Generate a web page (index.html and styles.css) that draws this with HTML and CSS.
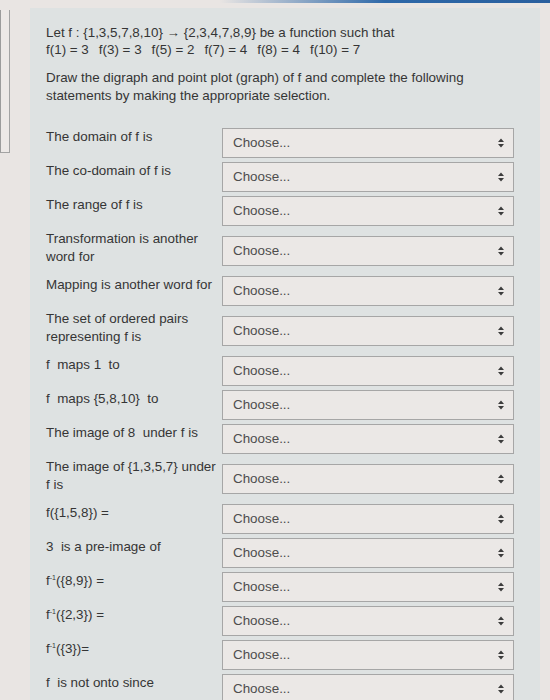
FILE: index.html
```html
<!DOCTYPE html>
<html lang="en">
<head>
<meta charset="utf-8">
<title>Function question</title>
<link rel="stylesheet" href="styles.css">
</head>
<body>
<div class="topbar"></div>
<div class="frame">
  <div class="sidetab"></div>
  <div class="gutter"></div>
  <main class="panel">
    <div class="intro">
      <p class="def">Let f : {1,3,5,7,8,10} → {2,3,4,7,8,9} be a function such that</p>
      <p class="values"><span>f(1) = 3</span><span>f(3) = 3</span><span>f(5) = 2</span><span>f(7) = 4</span><span>f(8) = 4</span><span>f(10) = 7</span></p>
      <p class="task">Draw the digraph and point plot (graph) of f and complete the following statements by making the appropriate selection.</p>
    </div>

    <div class="rows">
      <div class="row"><div class="label">The domain of f is</div><div class="select"><span>Choose...</span><svg class="arrows" width="6" height="10" viewBox="0 0 6 10"><path d="M0 4 L3 0.5 L6 4 Z M0 6 L3 9.5 L6 6 Z"/></svg></div></div>
      <div class="row"><div class="label">The co-domain of f is</div><div class="select"><span>Choose...</span><svg class="arrows" width="6" height="10" viewBox="0 0 6 10"><path d="M0 4 L3 0.5 L6 4 Z M0 6 L3 9.5 L6 6 Z"/></svg></div></div>
      <div class="row"><div class="label">The range of f is</div><div class="select"><span>Choose...</span><svg class="arrows" width="6" height="10" viewBox="0 0 6 10"><path d="M0 4 L3 0.5 L6 4 Z M0 6 L3 9.5 L6 6 Z"/></svg></div></div>
      <div class="row tall"><div class="label">Transformation is another word for</div><div class="select"><span>Choose...</span><svg class="arrows" width="6" height="10" viewBox="0 0 6 10"><path d="M0 4 L3 0.5 L6 4 Z M0 6 L3 9.5 L6 6 Z"/></svg></div></div>
      <div class="row"><div class="label">Mapping is another word for</div><div class="select"><span>Choose...</span><svg class="arrows" width="6" height="10" viewBox="0 0 6 10"><path d="M0 4 L3 0.5 L6 4 Z M0 6 L3 9.5 L6 6 Z"/></svg></div></div>
      <div class="row tall"><div class="label">The set of ordered pairs representing f is</div><div class="select"><span>Choose...</span><svg class="arrows" width="6" height="10" viewBox="0 0 6 10"><path d="M0 4 L3 0.5 L6 4 Z M0 6 L3 9.5 L6 6 Z"/></svg></div></div>
      <div class="row"><div class="label">f&nbsp; maps 1&nbsp; to</div><div class="select"><span>Choose...</span><svg class="arrows" width="6" height="10" viewBox="0 0 6 10"><path d="M0 4 L3 0.5 L6 4 Z M0 6 L3 9.5 L6 6 Z"/></svg></div></div>
      <div class="row"><div class="label">f&nbsp; maps {5,8,10}&nbsp; to</div><div class="select"><span>Choose...</span><svg class="arrows" width="6" height="10" viewBox="0 0 6 10"><path d="M0 4 L3 0.5 L6 4 Z M0 6 L3 9.5 L6 6 Z"/></svg></div></div>
      <div class="row"><div class="label">The image of 8&nbsp; under f is</div><div class="select"><span>Choose...</span><svg class="arrows" width="6" height="10" viewBox="0 0 6 10"><path d="M0 4 L3 0.5 L6 4 Z M0 6 L3 9.5 L6 6 Z"/></svg></div></div>
      <div class="row tall"><div class="label">The image of {1,3,5,7} under f is</div><div class="select"><span>Choose...</span><svg class="arrows" width="6" height="10" viewBox="0 0 6 10"><path d="M0 4 L3 0.5 L6 4 Z M0 6 L3 9.5 L6 6 Z"/></svg></div></div>
      <div class="row"><div class="label">f({1,5,8}) =</div><div class="select"><span>Choose...</span><svg class="arrows" width="6" height="10" viewBox="0 0 6 10"><path d="M0 4 L3 0.5 L6 4 Z M0 6 L3 9.5 L6 6 Z"/></svg></div></div>
      <div class="row"><div class="label">3&nbsp; is a pre-image of</div><div class="select"><span>Choose...</span><svg class="arrows" width="6" height="10" viewBox="0 0 6 10"><path d="M0 4 L3 0.5 L6 4 Z M0 6 L3 9.5 L6 6 Z"/></svg></div></div>
      <div class="row"><div class="label">f<sup>-1</sup>({8,9}) =</div><div class="select"><span>Choose...</span><svg class="arrows" width="6" height="10" viewBox="0 0 6 10"><path d="M0 4 L3 0.5 L6 4 Z M0 6 L3 9.5 L6 6 Z"/></svg></div></div>
      <div class="row"><div class="label">f<sup>-1</sup>({2,3}) =</div><div class="select"><span>Choose...</span><svg class="arrows" width="6" height="10" viewBox="0 0 6 10"><path d="M0 4 L3 0.5 L6 4 Z M0 6 L3 9.5 L6 6 Z"/></svg></div></div>
      <div class="row"><div class="label">f<sup>-1</sup>({3})=</div><div class="select"><span>Choose...</span><svg class="arrows" width="6" height="10" viewBox="0 0 6 10"><path d="M0 4 L3 0.5 L6 4 Z M0 6 L3 9.5 L6 6 Z"/></svg></div></div>
      <div class="row"><div class="label">f&nbsp; is not onto since</div><div class="select"><span>Choose...</span><svg class="arrows" width="6" height="10" viewBox="0 0 6 10"><path d="M0 4 L3 0.5 L6 4 Z M0 6 L3 9.5 L6 6 Z"/></svg></div></div>
    </div>
  </main>
</div>
</body>
</html>
```

FILE: styles.css
```css
html, body {
  margin: 0;
  padding: 0;
}

body {
  width: 550px;
  height: 700px;
  overflow: hidden;
  background: #e9e5e3;
  font-family: "Liberation Sans", Arial, sans-serif;
  font-size: 13.4px;
  color: #353535;
}

.topbar {
  height: 3px;
  background: linear-gradient(to right, rgba(40, 90, 160, 0) 0%, rgba(40, 90, 160, 0) 40%, #2f68a8 70%, #2a5f9e 100%);
}

.frame {
  display: flex;
  align-items: flex-start;
  padding-top: 5px;
}

.sidetab {
  flex: 0 0 8px;
  height: 142px;
  margin-top: 2px;
  background: #ede9e7;
  border-left: 1px solid #9c9c9c;
  border-right: 1px solid #a3a3a3;
  border-bottom: 1px solid #a3a3a3;
}

.gutter {
  flex: 0 0 20px;
}

.panel {
  flex: 0 0 510px;
  box-sizing: border-box;
  min-height: 720px;
  background: #dee2e2;
  padding: 17px 0 0 16px;
}

.intro p {
  margin: 0;
}

.def,
.values {
  line-height: 16.5px;
}

.values {
  display: flex;
  gap: 10px;
}

.task {
  width: 468px;
  line-height: 18px;
  margin-top: 11px !important;
}

.rows {
  margin-top: 20.5px;
}

.row {
  display: grid;
  grid-template-columns: 174px 292px;
  column-gap: 2px;
  align-items: start;
  padding: 2px 0;
}

.row.tall {
  min-height: 46px;
  box-sizing: border-box;
}

.label {
  line-height: 18px;
}

.label sup {
  font-size: 7px;
  line-height: 0;
  vertical-align: 5px;
}

.select {
  align-self: center;
  box-sizing: border-box;
  height: 30px;
  display: flex;
  align-items: center;
  justify-content: space-between;
  padding: 0 9px 0 10px;
  background: #ebe8e6;
  border: 1px solid #a6a6a6;
  color: #4d4d4d;
}

.arrows {
  display: block;
  fill: #3c3c3c;
}
```
